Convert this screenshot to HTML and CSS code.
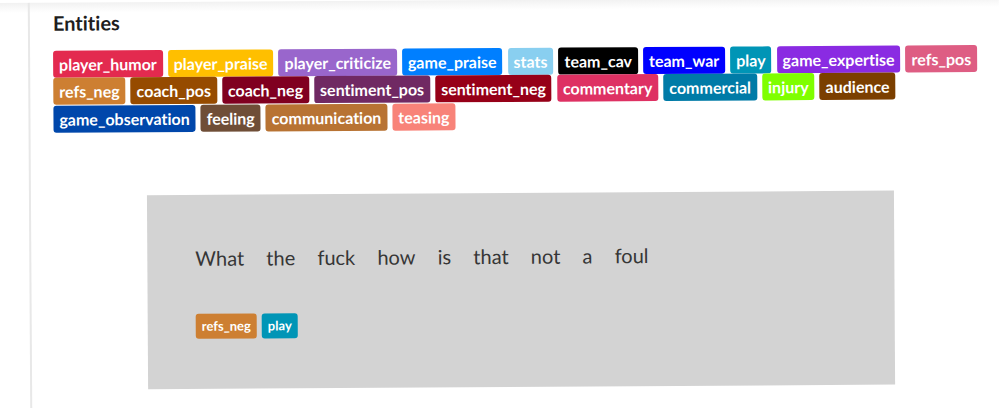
FILE: index.html
```html
<!DOCTYPE html>
<html lang="en">
<head>
<meta charset="utf-8">
<title>Entities</title>
<link rel="stylesheet" href="styles.css">
</head>
<body>
<div class="page">
  <aside class="rail"></aside>
  <main class="content">
    <h2 class="title">Entities</h2>
    <div class="labels">
      <span class="tag c-player_humor">player_humor</span>
      <span class="tag c-player_praise">player_praise</span>
      <span class="tag c-player_criticize">player_criticize</span>
      <span class="tag c-game_praise">game_praise</span>
      <span class="tag c-stats">stats</span>
      <span class="tag c-team_cav">team_cav</span>
      <span class="tag c-team_war">team_war</span>
      <span class="tag c-play">play</span>
      <span class="tag c-game_expertise">game_expertise</span>
      <span class="tag c-refs_pos">refs_pos</span>
      <span class="tag c-refs_neg">refs_neg</span>
      <span class="tag c-coach_pos">coach_pos</span>
      <span class="tag c-coach_neg">coach_neg</span>
      <span class="tag c-sentiment_pos">sentiment_pos</span>
      <span class="tag c-sentiment_neg">sentiment_neg</span>
      <span class="tag c-commentary">commentary</span>
      <span class="tag c-commercial">commercial</span>
      <span class="tag c-injury">injury</span>
      <span class="tag c-audience">audience</span>
      <span class="tag c-game_observation">game_observation</span>
      <span class="tag c-feeling">feeling</span>
      <span class="tag c-communication">communication</span>
      <span class="tag c-teasing">teasing</span>
    </div>

    <section class="sample">
      <p class="tokens">
        <span class="token">What</span>
        <span class="token">the</span>
        <span class="token">fuck</span>
        <span class="token">how</span>
        <span class="token">is</span>
        <span class="token">that</span>
        <span class="token">not</span>
        <span class="token">a</span>
        <span class="token">foul</span>
      </p>
      <div class="applied">
        <span class="tag tag-sm c-refs_neg">refs_neg</span>
        <span class="tag tag-sm c-play">play</span>
      </div>
    </section>
  </main>
</div>
</body>
</html>
```

FILE: styles.css
```css
html, body {
  margin: 0;
  padding: 0;
  background: #ffffff;
}

body {
  font-family: Lato, "Open Sans", "Liberation Sans", sans-serif;
  font-variant-ligatures: no-common-ligatures;
  color: #222;
  height: 408px;
  overflow: hidden;
}

.page {
  display: flex;
  height: 420px;
  background: linear-gradient(to bottom, #f1f1f1 0, #fafafa 6px, #ffffff 10px);
  transform: rotate(-0.35deg);
  transform-origin: 500px 204px;
}

.rail {
  flex: 0 0 29px;
  border-right: 2px solid #e8e8e8;
}

.content {
  flex: 1;
  padding: 8px 12px 0 23px;
}

.title {
  margin: 0;
  font-size: 20px;
  line-height: 24px;
  font-weight: 700;
  color: #1e1e1e;
}

.labels {
  display: flex;
  flex-wrap: wrap;
  column-gap: 5.2px;
  row-gap: 0.3px;
  margin-top: 16px;
}

.tag {
  display: inline-block;
  height: 27px;
  line-height: 27px;
  padding: 0 5.9px;
  border-radius: 3px;
  font-size: 16px;
  font-weight: 700;
  color: #ffffff;
  white-space: nowrap;
}

.tag-sm {
  height: 25px;
  line-height: 25px;
  font-size: 13px;
  padding: 0 6px;
}

.c-player_humor { background: #e32a4f; }
.c-player_praise { background: #ffbf00; }
.c-player_criticize { background: #9966cc; }
.c-game_praise { background: #007fff; }
.c-stats { background: #89cff0; }
.c-team_cav { background: #000000; }
.c-team_war { background: #0000ff; }
.c-play { background: #0095b6; }
.c-game_expertise { background: #8a2be2; }
.c-refs_pos { background: #de5d83; }
.c-refs_neg { background: #cd7f32; }
.c-coach_pos { background: #964b00; }
.c-coach_neg { background: #800020; }
.c-sentiment_pos { background: #702963; }
.c-sentiment_neg { background: #960018; }
.c-commentary { background: #de3163; }
.c-commercial { background: #007ba7; }
.c-injury { background: #7fff00; }
.c-audience { background: #7b3f00; }
.c-game_observation { background: #0047ab; }
.c-feeling { background: #6f4e37; }
.c-communication { background: #b87333; }
.c-teasing { background: #f88379; }

.sample {
  width: 747.5px;
  height: 194.5px;
  box-sizing: border-box;
  margin: 63px 0 0 92.5px;
  padding: 51px 48.5px 0;
  background: #d3d3d3;
}

.tokens {
  display: flex;
  column-gap: 22.2px;
  margin: 0;
  font-size: 20px;
  line-height: 24px;
  color: #363636;
}

.applied {
  display: flex;
  gap: 5px;
  margin-top: 44px;
}
```
